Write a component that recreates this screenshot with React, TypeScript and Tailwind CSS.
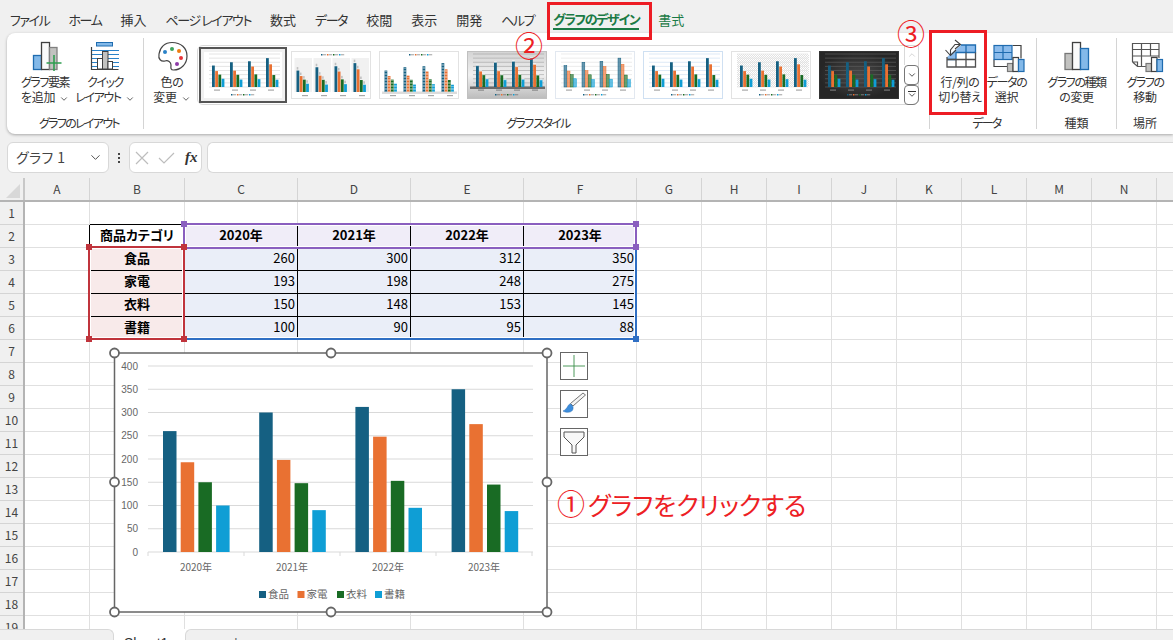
import { ChevronDown, ChevronUp } from "lucide-react";

const cjk = "font-['Noto_Sans_CJK_JP','Noto_Sans',sans-serif]";

const blue = "#156082";
const orange = "#E97132";
const green = "#196B24";
const cyan = "#0F9ED5";
const seriesColors = [blue, orange, green, cyan];

const years = ["2020年", "2021年", "2022年", "2023年"];
const series = [
  { name: "食品", values: [260, 300, 312, 350] },
  { name: "家電", values: [193, 198, 248, 275] },
  { name: "衣料", values: [150, 148, 153, 145] },
  { name: "書籍", values: [100, 90, 95, 88] },
];

const columns = ["A", "B", "C", "D", "E", "F", "G", "H", "I", "J", "K", "L", "M", "N", "O"];
const rowCount = 19;
const colGrid =
  "grid grid-cols-[65px_95px_113px_113px_113px_113px_65px_65px_65px_65px_65px_65px_65px_65px_65px]";

const tabs = ["ファイル", "ホーム", "挿入", "ページ レイアウト", "数式", "データ", "校閲", "表示", "開発", "ヘルプ"];

const hasKana = (s: string) => /[ァ-ヶー]/.test(s);

function Chevron() {
  return <ChevronDown size={10} strokeWidth={2} className="inline-block ml-[4px] text-[#444]" />;
}

function Icon({ cx, children }: { cx: number; children: React.ReactNode }) {
  return (
    <svg width="32" height="32" viewBox={`${cx - 16} 41 32 32`} className="overflow-visible">
      {children}
    </svg>
  );
}

function MiniBarIcon({ x, top }: { x: number; top: number[] }) {
  // gray, white and blue bars at the corner of the table icons
  const w = 5.5;
  const base = 71.5;
  return (
    <g strokeWidth="1.2">
      <rect x={x} y={top[0]} width={w} height={base - top[0]} fill="#c2c2c0" stroke="#777" />
      <rect x={x + w} y={top[1]} width={w} height={base - top[1]} fill="#fafafa" stroke="#404040" />
      <rect x={x + w * 2} y={top[2]} width={w} height={base - top[2]} fill="#83b9e9" stroke="#1f6cb0" />
    </g>
  );
}

function ChartElementIcon() {
  return (
    <Icon cx={45}>
      <rect x="33.5" y="55.5" width="8" height="14" fill="#83b9e9" stroke="#1f6cb0" strokeWidth="1.3" />
      <rect x="41.5" y="42.5" width="8" height="27" fill="#fafafa" stroke="#404040" strokeWidth="1.3" />
      <rect x="49.5" y="47.5" width="7.5" height="22" fill="#c2c2c0" stroke="#808080" strokeWidth="1.3" />
      <path d="M54 55v16M46.500 63h15" stroke="#2f9e50" strokeWidth="1.6" fill="none" />
    </Icon>
  );
}

function QuickLayoutIcon() {
  return (
    <Icon cx={105}>
      <rect x="96.500" y="42.500" width="16" height="3.500" fill="#83b9e9" stroke="#1f6cb0" />
      <path d="M91 50.500h28M91 54.500h28M91 58.500h28M91 62.500h28M91 66.500h28" stroke="#2a82c8" strokeWidth="1" fill="none" />
      <rect x="97.500" y="58.500" width="5" height="10.500" fill="#fff" stroke="#404040" />
      <rect x="102.500" y="51.500" width="5.500" height="17.500" fill="#c2c2c0" stroke="#404040" />
      <rect x="108" y="61.500" width="4.500" height="7.500" fill="#fff" stroke="#404040" />
      <path d="M91.500 47v22.500h27" stroke="#404040" strokeWidth="1.200" fill="none" />
    </Icon>
  );
}

function PaletteIcon() {
  return (
    <Icon cx={172}>
      <path
        d="M172 42.500C181 42.500 187 48 187 56C187 64 181 70 173.500 70C170 70 171 67 171 65C171 62 168 60 165 61C161 62 158 59 159 54C160 47 165 42.500 172 42.500Z"
        fill="#fff"
        stroke="#444"
        strokeWidth="1.200"
      />
      <circle cx="165" cy="52" r="2" fill="#2a82c8" />
      <circle cx="172" cy="49" r="2" fill="#3da35d" />
      <circle cx="179" cy="51" r="2" fill="#ee7d11" />
      <circle cx="181" cy="58" r="2" fill="#e8343a" />
      <circle cx="177" cy="64" r="2" fill="#8e3ba8" />
    </Icon>
  );
}

function SwitchIcon() {
  return (
    <Icon cx={960}>
      <path d="M947 59.500V57l14-12h14.500v7.500H956v7z" fill="#8cbcec" />
      <path d="M961 45h14.500v7.500H956v7h-9M966 45v7.500" fill="none" stroke="#1f6cb0" strokeWidth="1.300" />
      <path
        d="M975.500 52.500V67H947V57M947 59.500h28.500M956 59.500V67M966 52.500V67"
        fill="none"
        stroke="#505050"
        strokeWidth="1.300"
      />
      <path
        d="M955 40l5.500 4.500-5.500 4.500M960 44.500h-5l-4.500 5.500v5M945.500 50l5 5.500 5.500-5.500"
        fill="none"
        stroke="#404040"
        strokeWidth="1.100"
      />
    </Icon>
  );
}

function SelectDataIcon() {
  return (
    <Icon cx={1006.5}>
      <path d="M1012 45.500h8.500v13M1011 66.500h-17.500v-7" fill="none" stroke="#404040" strokeWidth="1.200" />
      <rect x="993.500" y="45.500" width="18" height="14" fill="#8cbcec" stroke="#1f6cb0" strokeWidth="1.200" />
      <path d="M1002.500 45.500v14M993.500 52.500h18" stroke="#1f6cb0" strokeWidth="1.200" />
      <MiniBarIcon x={1007} top={[63.5, 57.5, 59.5]} />
    </Icon>
  );
}

function ChangeTypeIcon() {
  return (
    <Icon cx={1076.5}>
      <rect x="1064.500" y="53.500" width="7.500" height="16" fill="#c2c2c0" stroke="#777" strokeWidth="1.300" />
      <rect x="1072" y="42.500" width="8" height="27" fill="#fafafa" stroke="#404040" strokeWidth="1.300" />
      <rect x="1080" y="48.500" width="8" height="21" fill="#83b9e9" stroke="#1f6cb0" strokeWidth="1.300" />
    </Icon>
  );
}

function MoveIcon() {
  return (
    <Icon cx={1145}>
      <path
        d="M1132.500 62V43.500h26.500V58M1132.500 49.500h26.500M1132.500 56h26.500M1141.500 43.500v23M1150.500 43.500v13M1132.500 62l5 4.500h9M1132.500 62h5v4"
        fill="none"
        stroke="#555"
        strokeWidth="1.200"
      />
      <MiniBarIcon x={1146} top={[63.5, 57.5, 59.5]} />
    </Icon>
  );
}

interface ThumbProps {
  id: string;
  bg?: string;
  gridColor?: string;
  gridWidth?: number;
  frame?: string;
  legend?: "top" | "bottom";
  hatch?: boolean;
  panels?: boolean;
  striped?: boolean;
  caps?: boolean;
  outline?: boolean;
  floor?: string;
  labelColor?: string;
}

function Thumb(p: ThumbProps) {
  const legendTop = p.legend === "top";
  const base = legendTop ? 41 : 36;
  const top = legendTop ? 8 : 3;
  const scale = (base - top) / 400;
  const x0 = legendTop ? 5.5 : 9;
  const step = legendTop ? 19 : 18;
  const label = p.labelColor ?? "#a8a8a8";
  return (
    <svg width="80" height="48" viewBox="0 0 80 48" className="shrink-0 block">
      <defs>
        <linearGradient id={`${p.id}-bg`} x1="0" y1="0" x2="0" y2="1">
          <stop offset="0" stopColor="#d4d4d4" />
          <stop offset="0.5" stopColor="#f0f0f0" />
          <stop offset="1" stopColor="#bcbcbc" />
        </linearGradient>
        <radialGradient id={`${p.id}-dark`}>
          <stop offset="0" stopColor="#4a4a4a" />
          <stop offset="1" stopColor="#262626" />
        </radialGradient>
        <pattern id={`${p.id}-hatch`} width="2" height="2" patternUnits="userSpaceOnUse">
          <path d="M0 2L2 0" stroke="#c4c4c4" strokeWidth="0.5" />
        </pattern>
      </defs>
      <rect
        x="0.500"
        y="0.500"
        width="79"
        height="47"
        fill={p.bg === "gray" ? `url(#${p.id}-bg)` : p.bg === "dark" ? `url(#${p.id}-dark)` : "#fff"}
        stroke={p.frame ?? "#e2e2e2"}
      />
      {p.hatch && <rect x="6" y="3" width="72" height="33" fill={`url(#${p.id}-hatch)`} />}
      {p.panels &&
        [0, 1, 2, 3].map(i => <rect key={i} x={3.5 + i * 19} y="7" width="17.500" height="34" fill="#f1f1f1" />)}
      {!p.panels &&
        [0, 1, 2, 3, 4, 5, 6, 7, 8].map(i => (
          <line
            key={i}
            x1="6"
            x2="77"
            y1={base - i * ((base - top) / 8)}
            y2={base - i * ((base - top) / 8)}
            stroke={p.gridColor ?? "#e4e4e4"}
            strokeWidth={p.gridWidth ?? 0.7}
          />
        ))}
      {p.floor && <rect x="3" y={base - 0.5} width="75" height="2.500" fill={p.floor} />}
      {years.map((_, c) =>
        series.map((s, i) => {
          const h = s.values[c] * scale;
          const x = x0 + c * step + i * 3.2;
          const y = base - h;
          const color = seriesColors[i];
          return (
            <g key={`${c}-${i}`}>
              <rect
                x={x}
                y={y}
                width="2.800"
                height={h}
                fill={color}
                fillOpacity={p.outline ? 0.65 : 1}
                stroke={p.outline ? color : "none"}
                strokeWidth="0.5"
              />
              {p.striped &&
                Array.from({ length: Math.floor(h / 1.5) }).map((_, k) => (
                  <rect key={k} x={x} y={base - k * 1.5 - 1} width="2.800" height="0.500" fill="#fff" fillOpacity="0.7" />
                ))}
              {p.caps && <rect x={x} y={y - 1.2} width="2.800" height="1.800" fill="#fff" fillOpacity="0.55" />}
              {p.panels && <rect x={x + 0.2} y={y - 3.5} width="1.600" height="2.500" fill="#c0c0c0" />}
            </g>
          );
        })
      )}
      {[0, 1, 2, 3].map(i => (
        <rect key={i} x={11 + i * step} y={legendTop ? 44 : 38.5} width="6" height="1.200" fill={label} />
      ))}
      {seriesColors.map((color, i) => (
        <g key={color}>
          <rect x={(legendTop ? 30 : 28) + i * 6} y={legendTop ? 3 : 43} width="1.500" height="1.500" fill={color} />
          <rect x={(legendTop ? 32 : 30) + i * 6} y={legendTop ? 3.2 : 43.2} width="3.200" height="1.100" fill={label} />
        </g>
      ))}
    </svg>
  );
}

function RibbonButton({ icon, lines, chevron, className }: { icon: React.ReactNode; lines: string[]; chevron?: boolean; className: string }) {
  return (
    <div className={`flex flex-col items-center ${className}`}>
      <div className="h-[34px] flex items-center justify-center">{icon}</div>
      {lines.map((line, i) => (
        <div
          key={line}
          className={`h-[15px] leading-[15px] whitespace-nowrap text-[12px] text-[#333] ${hasKana(line) ? "tracking-[-1.4px]" : "tracking-[-0.3px]"}`}
        >
          {line}
          {chevron && i === lines.length - 1 && <Chevron />}
        </div>
      ))}
    </div>
  );
}

function Group({ label, className, children }: { label: string; className: string; children: React.ReactNode }) {
  return (
    <div className={`flex flex-col shrink-0 ${className}`}>
      <div className="h-[82px] pt-[7px] flex">{children}</div>
      <div
        className={`h-[16px] leading-[16px] text-center text-[12px] text-[#333] whitespace-nowrap ${hasKana(label) ? "tracking-[-1.7px]" : ""}`}
      >
        {label}
      </div>
    </div>
  );
}

function Separator() {
  return <div className="w-px my-[5px] bg-[#d4d4d4] shrink-0" />;
}

function Ribbon() {
  return (
    <div className="ml-[7px] h-[101px] bg-white rounded-l-lg shadow-[0_1px_3px_rgba(0,0,0,0.3)] flex">
      <Group label="グラフのレイアウト" className="w-[136px] pl-2">
        <RibbonButton className="w-[60px]" icon={<ChartElementIcon />} lines={["グラフ要素", "を追加"]} chevron />
        <RibbonButton className="w-[60px]" icon={<QuickLayoutIcon />} lines={["クイック", "レイアウト"]} chevron />
      </Group>
      <Separator />
      <Group label="グラフ スタイル" className="w-[785px] pl-[3px]">
        <RibbonButton className="w-[50px]" icon={<PaletteIcon />} lines={["色の", "変更"]} chevron />
        <div className="h-[60px] w-[722px] mt-[5px] flex items-center gap-[4px] pl-[1px] border border-[#d9d9d9] rounded-l-md rounded-br-md relative">
          <div className="w-[88px] h-[56px] shrink-0 border-2 border-[#555] bg-[#f0f0f0] flex items-center justify-center">
            <Thumb id="t0" legend="bottom" gridWidth={1} frame="#f0f0f0" />
          </div>
          <Thumb id="t1" legend="top" panels />
          <div className="w-1" />
          <Thumb id="t2" legend="top" striped floor="#dcdcdc" gridColor="#ffffff" />
          <div className="w-1" />
          <Thumb id="t3" bg="gray" legend="bottom" caps floor="#6b6b6b" gridColor="#a9a9a9" frame="#c0c0c0" labelColor="#888" />
          <div className="w-1" />
          <Thumb id="t4" legend="bottom" outline frame="#e2e8f0" />
          <div className="w-1" />
          <Thumb id="t5" legend="bottom" gridColor="#cfe0f2" frame="#cfe0f2" />
          <div className="w-1" />
          <Thumb id="t6" legend="bottom" hatch />
          <div className="w-1" />
          <Thumb id="t7" bg="dark" legend="bottom" gridColor="#5c5c5c" frame="#333" labelColor="#777" />
          <div className="w-[15px] ml-[1px] shrink-0 flex flex-col h-[60px] -my-px">
            <div className="h-[20px] flex items-center justify-center border-l border-[#d9d9d9] text-[#bbb]">
              <ChevronUp size={10} strokeWidth={1.5} />
            </div>
            <div className="h-[20px] flex items-center justify-center border border-[#777] rounded-sm text-[#333]">
              <ChevronDown size={10} strokeWidth={2} />
            </div>
            <div className="h-[20px] flex flex-col items-center justify-center border border-[#777] rounded-sm rounded-br-md text-[#333]">
              <div className="w-[8px] h-px bg-[#333]" />
              <ChevronDown size={10} strokeWidth={2} className="-mt-[2px]" />
            </div>
          </div>
        </div>
      </Group>
      <Separator />
      <Group label="データ" className="w-[106px] pl-[7px]">
        <RibbonButton className="w-[46px]" icon={<SwitchIcon />} lines={["行/列の", "切り替え"]} />
        <RibbonButton className="w-[47px]" icon={<SelectDataIcon />} lines={["データの", "選択"]} />
      </Group>
      <Separator />
      <Group label="種類" className="w-[79px]">
        <RibbonButton className="w-full" icon={<ChangeTypeIcon />} lines={["グラフの種類", "の変更"]} />
      </Group>
      <Separator />
      <Group label="場所" className="w-[56px]">
        <RibbonButton className="w-full" icon={<MoveIcon />} lines={["グラフの", "移動"]} />
      </Group>
    </div>
  );
}

function FormulaBar() {
  return (
    <div className="mt-2 h-[31px] pl-[7px] flex">
      <div className="w-[102px] bg-white border border-[#d8d8d8] rounded-md flex items-center justify-between pl-2 pr-[5px]">
        <span className="text-[14px] tracking-[0.4px] text-[#444]">グラフ 1</span>
        <ChevronDown size={15} strokeWidth={1.5} className="text-[#444]" />
      </div>
      <div className="w-5 flex flex-col items-center justify-center gap-[2px]">
        <div className="w-[2px] h-[2px] bg-[#444]" />
        <div className="w-[2px] h-[2px] bg-[#444]" />
        <div className="w-[2px] h-[2px] bg-[#444]" />
      </div>
      <div className="w-[73px] bg-white border border-[#d8d8d8] rounded-md flex items-center pl-[5px]">
        <svg width="48" height="16" viewBox="0 0 48 16">
          <path d="M1 2l12 12M13 2L1 14" stroke="#bdbdbd" strokeWidth="1.200" fill="none" />
          <path d="M24 8l5 5L39 3" stroke="#bdbdbd" strokeWidth="1.200" fill="none" />
        </svg>
        <span className="ml-[2px] font-['Liberation_Serif',serif] italic font-bold text-[15px] text-[#333]">fx</span>
      </div>
      <div className="ml-[5px] flex-1 bg-white border border-r-0 border-[#d8d8d8] rounded-l-md" />
    </div>
  );
}

function Cell({ row, col }: { row: number; col: number }) {
  const inTable = row >= 2 && row <= 6 && col >= 1 && col <= 5;
  let cls = "border-r border-b border-[#e0e0e0]";
  let text: string | number = "";
  let align = "";

  if (inTable) {
    cls = "border-r border-b border-black pb-[3px]";
    if (row === 2) {
      text = col === 1 ? "商品カテゴリ" : years[col - 2];
      align = "justify-center font-bold";
      if (col > 1) cls += " bg-[#f0edf8]";
    } else if (col === 1) {
      text = series[row - 3].name;
      align = "justify-center font-bold";
      cls += " bg-[#f8eaea]";
    } else {
      text = series[row - 3].values[col - 2];
      align = "justify-end pr-[2px] text-[#333]";
      cls += " bg-[#eaeef8]";
    }
  } else if (row === 1 && col === 1) {
    cls = "border-r border-b border-[#e0e0e0] border-b-black";
  } else if (row === 2 && col === 0) {
    cls = "border-r border-b border-[#e0e0e0] border-r-black";
  }

  return <div className={`h-[23px] flex items-center text-[13px] text-black leading-none ${cls} ${align}`}>{text}</div>;
}

function Sheet() {
  const rows = Array.from({ length: rowCount }, (_, i) => i + 1);
  return (
    <>
      <div className="mt-[5px] h-[24px] flex bg-[#f0f0f0] border-b-2 border-[#b4b4b4] shrink-0">
        <div className="w-[25px] h-full shrink-0 border-r-2 border-[#c8c8c8] flex items-end justify-end pr-[3px] pb-[2px]">
          <div className="w-0 h-0 border-l-[14px] border-l-transparent border-b-[14px] border-b-[#d8d8d8]" />
        </div>
        <div className={`${colGrid} shrink-0`}>
          {columns.map(c => (
            <div key={c} className="h-[22px] border-r border-[#d4d4d4] flex items-center justify-center text-[12px] text-[#444]">
              {c}
            </div>
          ))}
        </div>
      </div>
      <div className="flex-1 flex bg-white overflow-hidden">
        <div className="w-[25px] shrink-0 bg-[#f0f0f0] border-r-2 border-[#b4b4b4]">
          {rows.map(r => (
            <div key={r} className="h-[23px] border-b border-[#d4d4d4] flex items-center justify-center text-[12px] text-[#444]">
              {r}
            </div>
          ))}
        </div>
        <div className={`${colGrid} shrink-0 content-start`}>
          {rows.map(r => columns.map((_, c) => <Cell key={`${r}-${c}`} row={r} col={c} />))}
        </div>
      </div>
    </>
  );
}

function SheetTabs() {
  return (
    <div className="h-[11px] flex bg-white shrink-0 overflow-hidden">
      <div className="w-[114px] bg-[#f0f0f0] border-t border-r border-[#d8d8d8] rounded-tr-md" />
      <div className="w-[71px] pt-[5px] pl-[10px] text-[14px] leading-[18px] text-[#333] font-['Liberation_Sans',sans-serif]">Sheet1</div>
      <div className="flex-1 bg-[#f0f0f0] border-t border-l border-[#d8d8d8] rounded-tl-md pl-[46px] pt-[4px] text-[14px] leading-[14px] text-[#555]">
        +
      </div>
    </div>
  );
}

function SelectionSquare({ className }: { className: string }) {
  return <div className={`absolute w-[6px] h-[6px] ${className}`} />;
}

function RangeOverlays() {
  return (
    <>
      <div className="absolute left-[183px] top-[223px] w-[454px] h-[26px] border-2 border-[#8a5fbf] shadow-[inset_0_0_0_1px_#fff]" />
      <div className="absolute left-[634px] top-[249px] w-px h-[88px] bg-white" />
      <div className="absolute left-[186px] top-[337px] w-[449px] h-px bg-white" />
      <div className="absolute left-[635px] top-[248px] w-[2px] h-[92px] bg-[#2f6fc4]" />
      <div className="absolute left-[185px] top-[338px] w-[452px] h-[2px] bg-[#2f6fc4]" />
      <div className="absolute left-[88px] top-[246px] w-[97px] h-[94px] border-2 border-[#c0343c] shadow-[inset_0_0_0_1px_#fff]" />
      <SelectionSquare className="left-[181px] top-[221px] bg-[#8a5fbf]" />
      <SelectionSquare className="left-[633px] top-[221px] bg-[#8a5fbf]" />
      <SelectionSquare className="left-[633px] top-[244px] bg-[#8a5fbf]" />
      <SelectionSquare className="left-[86px] top-[244px] bg-[#c0343c]" />
      <SelectionSquare className="left-[181px] top-[244px] bg-[#c0343c]" />
      <SelectionSquare className="left-[86px] top-[336px] bg-[#c0343c]" />
      <SelectionSquare className="left-[181px] top-[336px] bg-[#c0343c]" />
      <SelectionSquare className="left-[633px] top-[336px] bg-[#2f6fc4]" />
    </>
  );
}

function Chart() {
  const y0 = 552;
  const pxPerUnit = 186 / 400;
  const handles = [
    [114.5, 353],
    [331, 353],
    [547, 353],
    [114.5, 482],
    [547, 482],
    [114.5, 612],
    [331, 612],
    [547, 612],
  ];
  const legendX = [259, 297.5, 337, 375];
  return (
    <svg
      className="absolute left-[100px] top-[340px]"
      width="460"
      height="285"
      viewBox="100 340 460 285"
    >
      <rect x="114.500" y="353" width="432.500" height="259" fill="#fff" stroke="#666" strokeWidth="1.500" />
      {[0, 1, 2, 3, 4, 5, 6, 7, 8].map(i => {
        const v = i * 50;
        const y = y0 - v * pxPerUnit;
        return (
          <g key={v}>
            <line x1="148" x2="533" y1={y} y2={y} stroke="#d9d9d9" strokeWidth="1" />
            <text x="138" y={y + 3.5} textAnchor="end" fontSize="10" fill="#666" fontFamily="Liberation Sans, sans-serif">
              {v}
            </text>
          </g>
        );
      })}
      {[0, 1, 2, 3, 4].map(i => (
        <line key={i} x1={148 + i * 96} x2={148 + i * 96} y1={y0} y2={y0 + 4} stroke="#d9d9d9" />
      ))}
      {years.map((year, c) => (
        <g key={year}>
          {series.map((s, i) => {
            const h = s.values[c] * pxPerUnit;
            return (
              <rect key={s.name} x={163 + c * 96.2 + i * 17.7} y={y0 - h} width="13.500" height={h} fill={seriesColors[i]} />
            );
          })}
          <text
            x={196 + c * 96}
            y="571"
            textAnchor="middle"
            fontSize="10"
            fill="#666"
            fontFamily="Noto Sans CJK JP, sans-serif"
          >
            {year}
          </text>
        </g>
      ))}
      {series.map((s, i) => (
        <g key={s.name}>
          <rect x={legendX[i]} y="591" width="7" height="7" fill={seriesColors[i]} />
          <text x={legendX[i] + 9} y="598" fontSize="10.500" fill="#666" fontFamily="Noto Sans CJK JP, sans-serif">
            {s.name}
          </text>
        </g>
      ))}
      {handles.map(([x, y]) => (
        <circle key={`${x}-${y}`} cx={x} cy={y} r="4.500" fill="#fff" stroke="#666" strokeWidth="1.800" />
      ))}
    </svg>
  );
}

function ChartTools() {
  return (
    <div className="absolute left-[560px] top-[352px] flex flex-col gap-[10px]">
      <div className="w-[28px] h-[28px] bg-white border border-[#666] flex items-center justify-center">
        <svg width="22" height="22" viewBox="0 0 22 22">
          <path d="M11 0v22M0 11h22" stroke="#3b8f4a" strokeWidth="0.900" />
        </svg>
      </div>
      <div className="w-[28px] h-[28px] bg-white border border-[#666]">
        <svg width="26" height="26" viewBox="0 0 26 26">
          <path d="M24.500 4L12 15l-2.500-2.500L22 2z" fill="#f4f4f4" stroke="#666" strokeWidth="0.900" />
          <path d="M9.500 13c-3 0-2.500 5-7.500 7 3 2 9 2 10-2 .5-2-.5-4-2.500-5z" fill="#3c8ddc" stroke="#2a6cb0" strokeWidth="0.500" />
        </svg>
      </div>
      <div className="w-[28px] h-[28px] bg-white border border-[#666]">
        <svg width="26" height="26" viewBox="0 0 26 26">
          <path d="M3 3h20v5l-8 8v8h-4v-8L3 8z" fill="#f8f8f8" stroke="#555" strokeWidth="1" />
        </svg>
      </div>
    </div>
  );
}

function Annotations() {
  return (
    <>
      <div className="absolute left-[547px] top-[2px] w-[105px] h-[38px] border-[3px] border-[#ed1c24]" />
      <div className="absolute left-[929px] top-[30px] w-[58px] h-[85px] border-[3px] border-[#ed1c24]" />
      <div className="absolute left-[515px] top-[26px] w-[28px] h-[38px] leading-[38px] text-center text-[28px] text-[#ed2024] whitespace-nowrap">②</div>
      <div className="absolute left-[897px] top-[14px] w-[28px] h-[38px] leading-[38px] text-center text-[28px] text-[#ed2024] whitespace-nowrap">③</div>
      <div className="absolute left-[557px] top-[485px] h-[36px] leading-[36px] text-[25px] text-[#ed2024] whitespace-nowrap">
        <span className="text-[28px] mr-[3px]">①</span>グラフをクリックする
      </div>
    </>
  );
}

export default function App() {
  return (
    <div className={`relative w-[1173px] h-[640px] overflow-hidden bg-[#f0f0f0] flex flex-col ${cjk} [font-feature-settings:'palt']`}>
      <div className="h-[33px] pl-[10px] flex gap-[19px] text-[13px] text-[#333] shrink-0">
        {tabs.map(t => (
          <div key={t} className={`pt-[11px] leading-[18px] whitespace-nowrap ${hasKana(t) ? "tracking-[-1.4px]" : ""}`}>
            {t}
          </div>
        ))}
        <div className="h-[30px] pt-[10px] leading-[18px] font-bold tracking-[-1.4px] text-[#1a7a45] border-b-2 border-[#1a7a45] whitespace-nowrap">
          グラフのデザイン
        </div>
        <div className="pt-[11px] leading-[18px] text-[#1a7a45] whitespace-nowrap">書式</div>
      </div>
      <Ribbon />
      <FormulaBar />
      <Sheet />
      <SheetTabs />
      <RangeOverlays />
      <Chart />
      <ChartTools />
      <Annotations />
    </div>
  );
}
